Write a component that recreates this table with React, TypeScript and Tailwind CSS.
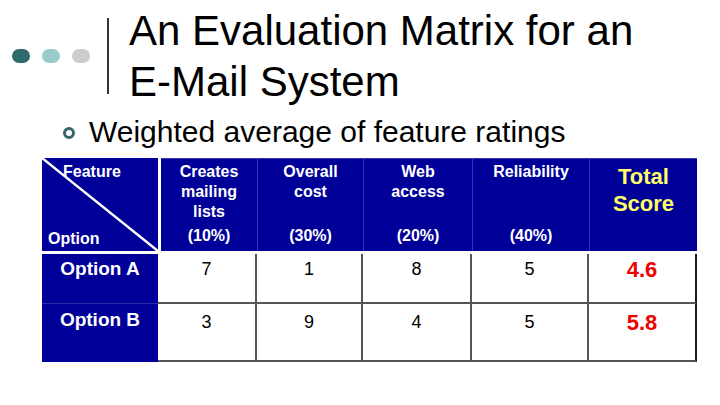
import React from 'react'

const grid = 'grid grid-cols-[116px_99px_106px_109px_117px_108px]'

const features = [
	{ lines: ['Creates', 'mailing', 'lists'], weight: '(10%)' },
	{ lines: ['Overall', 'cost'], weight: '(30%)' },
	{ lines: ['Web', 'access'], weight: '(20%)' },
	{ lines: ['Reliability'], weight: '(40%)' },
]

const rows = [
	{ name: 'Option A', values: ['7', '1', '8', '5'], total: '4.6', h: 'h-[50px]', pt: 'pt-[4px]', namePt: 'pt-[3px]' },
	{ name: 'Option B', values: ['3', '9', '4', '5'], total: '5.8', h: 'h-[58px]', pt: 'pt-[7px]', namePt: 'pt-[4px]' },
]

export default function App() {
	return (
		<div className="h-[405px] w-[720px] overflow-hidden bg-white font-['Liberation_Sans',Arial,sans-serif] text-black">
			{/* Title */}
			<div className="flex h-[114px]">
				<div className="flex w-[107px] items-center gap-[12px] pb-[2px] pl-[12px]">
					<span className="h-[14px] w-[18px] rounded-full bg-[#2f6a6c]" />
					<span className="h-[14px] w-[18px] rounded-full bg-[#99cccc]" />
					<span className="h-[14px] w-[18px] rounded-full bg-[#cccccc]" />
				</div>
				<div className="mt-[18px] h-[76px] w-[2px] bg-[#333333]" />
				<h1 className="ml-[20px] mt-[5px] text-[42px] leading-[51px] font-normal">
					An Evaluation Matrix for an
					<br />
					E-Mail System
				</h1>
			</div>

			{/* Bullet */}
			<div className="flex h-[36px] items-center pl-[63px]">
				<span className="mt-[2px] h-[12px] w-[12px] rounded-full border-[3px] border-[#336666]" />
				<p className="ml-[14px] text-[30px] leading-[36px]">Weighted average of feature ratings</p>
			</div>

			{/* Matrix */}
			<div className="ml-[42px] mt-[8px] w-[655px]">
				<div className={`${grid} h-[93px] text-[16px] font-bold leading-[20px] text-white`}>
					<div className="relative flex flex-col justify-between bg-[#000099] pb-[2px] pt-[4px]">
						<svg className="absolute inset-0 h-full w-full" viewBox="0 0 116 93" preserveAspectRatio="none">
							<line x1="0" y1="0" x2="116" y2="93" stroke="white" strokeWidth="2.5" />
						</svg>
						<span className="relative pl-[21px]">Feature</span>
						<span className="relative pl-[6px]">Option</span>
					</div>
					{features.map((f, i) => (
						<div
							key={i}
							className={`flex flex-col justify-between border-t border-[#3434b4] bg-[#000099] pb-[5px] pt-[3px] text-center ${i === 0 ? 'ml-[3px]' : 'border-l'}`}
						>
							<div>
								{f.lines.map((l) => (
									<div key={l}>{l}</div>
								))}
							</div>
							<div>{f.weight}</div>
						</div>
					))}
					<div className="border-l border-t border-[#3434b4] bg-[#000099] pt-[4px] text-center text-[22px] leading-[27px] text-[#ffff66]">
						Total
						<br />
						Score
					</div>
				</div>

				<div className="mt-[3px]">
					{rows.map((r, ri) => (
						<div key={r.name} className={`${grid} ${r.h}`}>
							<div
								className={`bg-[#000099] text-center text-[19px] font-bold leading-[23px] text-white ${r.namePt} ${ri === 0 ? 'border-b border-[#2b2bab]' : ''}`}
							>
								{r.name}
							</div>
							{r.values.map((v, i) => (
								<div key={i} className={`border-b-2 border-r-2 border-[#555555] text-center text-[18px] leading-[22px] ${r.pt}`}>
									{v}
								</div>
							))}
							<div className={`border-b-2 border-r-2 border-b-[#555555] border-r-[#1a1a1a] text-center text-[22px] font-bold leading-[24px] text-[#ee0000] ${r.pt}`}>
								{r.total}
							</div>
						</div>
					))}
				</div>
			</div>
		</div>
	)
}
